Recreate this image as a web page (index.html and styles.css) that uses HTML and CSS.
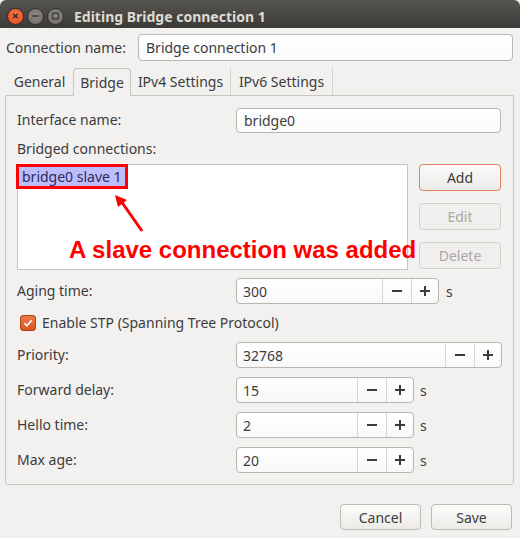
FILE: index.html
```html
<!DOCTYPE html>
<html>
<head>
<meta charset="utf-8">
<link rel="stylesheet" href="styles.css">
</head>
<body>
<div class="window">
  <div class="titlebar">
    <div class="wbtns">
      <span class="wb close"><svg width="16" height="16" viewBox="0 0 16 16"><line x1="5.5" y1="5.5" x2="10.5" y2="10.5" stroke="#3a2a22" stroke-width="1.6"/><line x1="10.5" y1="5.5" x2="5.5" y2="10.5" stroke="#3a2a22" stroke-width="1.6"/></svg></span>
      <span class="wb"><svg width="16" height="16" viewBox="0 0 16 16"><line x1="4.5" y1="8" x2="11.5" y2="8" stroke="#3c3b37" stroke-width="1.6"/></svg></span>
      <span class="wb"><svg width="16" height="16" viewBox="0 0 16 16"><rect x="5" y="5" width="6" height="6" fill="none" stroke="#3c3b37" stroke-width="1.4"/></svg></span>
    </div>
    <div class="title">Editing Bridge connection 1</div>
  </div>

  <div class="content">
    <div class="namerow">
      <span class="lbl namelbl">Connection name:</span>
      <div class="entry grow">Bridge connection 1</div>
    </div>

    <div class="tabs">
      <span class="tab t1">General</span>
      <span class="tab active">Bridge</span>
      <span class="tab t3">IPv4 Settings</span>
      <span class="tab t4">IPv6 Settings</span>
    </div>

    <div class="panel">
      <div class="row">
        <span class="lbl col">Interface name:</span>
        <div class="entry ifentry">bridge0</div>
      </div>
      <div class="lbl bridgedlbl">Bridged connections:</div>
      <div class="listarea">
        <div class="list">
          <div class="item">bridge0 slave 1</div>
        </div>
        <div class="listbtns">
          <div class="btn focus">Add</div>
          <div class="btn disabled">Edit</div>
          <div class="btn disabled">Delete</div>
        </div>
      </div>

      <div class="row aging">
        <span class="lbl col">Aging time:</span>
        <div class="spin w203"><span class="val">300</span><span class="sb"><svg width="12" height="12" viewBox="0 0 12 12"><line x1="1" y1="6" x2="11" y2="6" stroke="#3c3c3c" stroke-width="2"/></svg></span><span class="sb"><svg width="12" height="12" viewBox="0 0 12 12"><line x1="1" y1="6" x2="11" y2="6" stroke="#3c3c3c" stroke-width="2"/><line x1="6" y1="1" x2="6" y2="11" stroke="#3c3c3c" stroke-width="2"/></svg></span></div>
        <span class="unit">s</span>
      </div>

      <div class="checkrow">
        <span class="check"><svg width="16" height="16" viewBox="0 0 16 16"><path d="M3.8 8.2 L6.8 11.2 L12.2 4.8" fill="none" stroke="#ffffff" stroke-width="2"/></svg></span>
        <span class="lbl">Enable STP (Spanning Tree Protocol)</span>
      </div>

      <div class="row">
        <span class="lbl col">Priority:</span>
        <div class="spin w266"><span class="val">32768</span><span class="sb"><svg width="12" height="12" viewBox="0 0 12 12"><line x1="1" y1="6" x2="11" y2="6" stroke="#3c3c3c" stroke-width="2"/></svg></span><span class="sb"><svg width="12" height="12" viewBox="0 0 12 12"><line x1="1" y1="6" x2="11" y2="6" stroke="#3c3c3c" stroke-width="2"/><line x1="6" y1="1" x2="6" y2="11" stroke="#3c3c3c" stroke-width="2"/></svg></span></div>
      </div>

      <div class="row gap9">
        <span class="lbl col">Forward delay:</span>
        <div class="spin w178"><span class="val">15</span><span class="sb"><svg width="12" height="12" viewBox="0 0 12 12"><line x1="1" y1="6" x2="11" y2="6" stroke="#3c3c3c" stroke-width="2"/></svg></span><span class="sb"><svg width="12" height="12" viewBox="0 0 12 12"><line x1="1" y1="6" x2="11" y2="6" stroke="#3c3c3c" stroke-width="2"/><line x1="6" y1="1" x2="6" y2="11" stroke="#3c3c3c" stroke-width="2"/></svg></span></div>
        <span class="unit u2">s</span>
      </div>

      <div class="row gap9">
        <span class="lbl col">Hello time:</span>
        <div class="spin w178"><span class="val">2</span><span class="sb"><svg width="12" height="12" viewBox="0 0 12 12"><line x1="1" y1="6" x2="11" y2="6" stroke="#3c3c3c" stroke-width="2"/></svg></span><span class="sb"><svg width="12" height="12" viewBox="0 0 12 12"><line x1="1" y1="6" x2="11" y2="6" stroke="#3c3c3c" stroke-width="2"/><line x1="6" y1="1" x2="6" y2="11" stroke="#3c3c3c" stroke-width="2"/></svg></span></div>
        <span class="unit u2">s</span>
      </div>

      <div class="row gap9">
        <span class="lbl col">Max age:</span>
        <div class="spin w178"><span class="val">20</span><span class="sb"><svg width="12" height="12" viewBox="0 0 12 12"><line x1="1" y1="6" x2="11" y2="6" stroke="#3c3c3c" stroke-width="2"/></svg></span><span class="sb"><svg width="12" height="12" viewBox="0 0 12 12"><line x1="1" y1="6" x2="11" y2="6" stroke="#3c3c3c" stroke-width="2"/><line x1="6" y1="1" x2="6" y2="11" stroke="#3c3c3c" stroke-width="2"/></svg></span></div>
        <span class="unit u2">s</span>
      </div>
    </div>

    <div class="actions">
      <div class="btn act">Cancel</div>
      <div class="btn act">Save</div>
    </div>
  </div>

  <div class="annotation">A slave connection was added</div>
  <svg class="arrow" width="60" height="50" viewBox="0 0 60 50">
    <line x1="42" y1="46" x2="21" y2="16" stroke="#ff0000" stroke-width="3"/>
    <polygon points="15,10 27,15 18,22" fill="#ff0000"/>
  </svg>
</div>
</body>
</html>
```

FILE: styles.css
```css
* { box-sizing: border-box; }
html, body { margin: 0; padding: 0; }
body {
  width: 520px;
  height: 538px;
  background: #f2f1f0;
  font-family: "Noto Sans", "Open Sans", sans-serif;
  font-size: 14px;
  color: #3c3c3c;
  overflow: hidden;
}
.window { position: relative; width: 520px; height: 538px; }

.titlebar {
  height: 28px;
  background: linear-gradient(#56544f, #3c3b37);
  border-radius: 6px 6px 0 0;
  display: flex;
  align-items: center;
  padding-top: 4px;
}
.wbtns { display: flex; gap: 3px; margin-left: 7px; }
.wb {
  width: 17px; height: 17px; border-radius: 50%;
  background: radial-gradient(circle at 50% 40%, #8a8881, #6d6b65);
  border: 1px solid #2f2e2b;
  display: flex; align-items: center; justify-content: center;
}
.wb svg { display: block; }
.wb.close { background: radial-gradient(circle at 50% 35%, #f5794d, #e0461b); border-color: #3a2a22; }
.title {
  margin-left: 10px;
  color: #dfdbd2;
  font-weight: bold;
  font-size: 14px;
}

.content { padding: 6px 0 0 0; }

.lbl { color: #3c3c3c; line-height: 18px; }
.namerow { display: flex; align-items: center; height: 27px; padding-left: 6px; padding-right: 7px; }
.namelbl { width: 132px; }
.entry {
  height: 27px;
  border: 1px solid #b9b6b0;
  border-radius: 4px;
  background: linear-gradient(#ffffff, #fafafa);
  padding-left: 7px;
  display: flex; align-items: center;
  color: #3c3c3c;
}
.grow { flex: 1; }

.tabs {
  margin-top: 7px;
  display: flex;
  height: 27px;
  padding-left: 6px;
  position: relative;
  z-index: 2;
}
.tab {
  display: flex; align-items: center; justify-content: center;
  height: 27px;
  white-space: nowrap;
  border-right: 1px solid #d6d3ce;
}
.tab.t1 { width: 67px; border-right: none; }
.tab.active {
  border: 1px solid #c9c6c1;
  border-bottom: none;
  border-radius: 4px 4px 0 0;
  background: #f2f1f0;
  height: 28px;
  padding-bottom: 1px;
  width: 58px;
}
.tab.t3 { width: 100px; }
.tab.t4 { width: 102px; }

.panel {
  margin-left: 5px;
  width: 509px;
  height: 390px;
  border: 1px solid #c9c6c1;
  border-radius: 0 0 3px 3px;
  padding: 11px 0 0 11px;
}
.row { display: flex; align-items: center; height: 26px; }
.col { width: 219px; }
.ifentry { width: 265px; height: 25px; }
.bridgedlbl { height: 31px; padding-top: 7px; }

.listarea { display: flex; height: 106px; }
.list {
  width: 391px; height: 106px;
  background: #ffffff;
  border: 1px solid #c7c4bf;
  padding: 0;
}
.item {
  display: inline-block;
  margin-left: -2px;
  margin-top: -1px;
  padding: 0 3px 0 3px;
  height: 25px;
  line-height: 19px;
  border: 3px solid #ff0000;
  background: #bdbcfd;
  color: #2c2a5a;
}
.listbtns { margin-left: 11px; padding-top: 0; display: flex; flex-direction: column; gap: 12px; }
.btn {
  width: 82px; height: 27px;
  border: 1px solid #bdb9b4;
  border-radius: 4px;
  background: linear-gradient(#fbfbfa, #ecebe8);
  display: flex; align-items: center; justify-content: center;
  color: #3c3c3c;
}
.btn.focus { border-color: #e0825e; }
.btn.disabled { color: #aaa8a4; background: #f0efed; border-color: #d3d0cc; }

.aging { margin-top: 8px; }
.spin {
  display: flex; height: 26px;
  border: 1px solid #b9b6b0;
  border-radius: 4px;
  background: linear-gradient(#ffffff, #f8f8f8);
  overflow: hidden;
}
.val { flex: 1; padding-left: 6px; display: flex; align-items: center; }
.sb {
  width: 29px; display: flex; align-items: center; justify-content: center;
  border-left: 1px solid #d9d6d1;
}
.sb:last-child { width: 27px; }
.w203 { width: 203px; }
.w266 { width: 266px; }
.w178 { width: 178px; }
.unit { margin-left: 7px; }
.u2 { margin-left: 6px; }

.checkrow { display: flex; align-items: center; height: 38px; padding-left: 3px; }
.check {
  width: 16px; height: 16px; border-radius: 3px;
  background: linear-gradient(#ef7a4a, #d8541f);
  border: 1px solid #a8431a;
  display: flex; align-items: center; justify-content: center;
  margin-right: 6px;
}
.check svg { display: block; }
.gap9 { margin-top: 9px; }

.actions { display: flex; justify-content: flex-end; gap: 10px; margin-top: 19px; padding-right: 8px; }
.btn.act { width: 81px; height: 26px; }

.annotation {
  position: absolute;
  left: 69px; top: 237px;
  color: #ff0000;
  font-family: "Liberation Sans", Arial, sans-serif;
  font-weight: bold;
  font-size: 24px;
  line-height: 26px;
  white-space: nowrap;
}
.arrow { position: absolute; left: 100px; top: 185px; }
```
